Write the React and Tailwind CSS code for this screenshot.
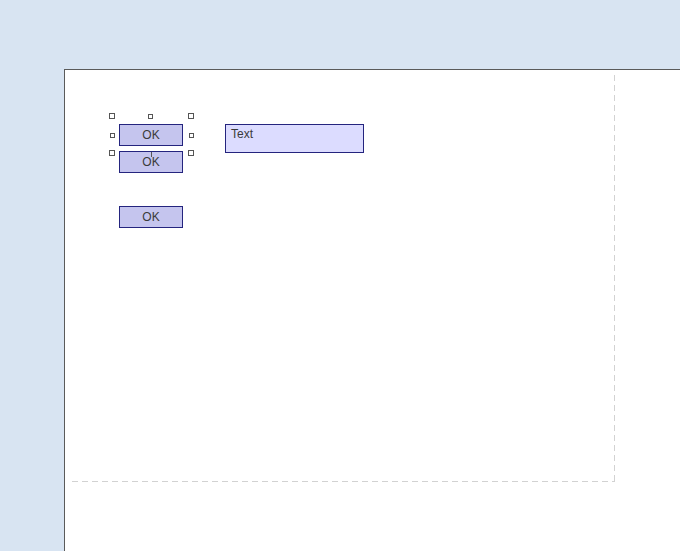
export default function App() {
  const handleCorner = "absolute w-[6px] h-[6px] border border-[#555] bg-white";
  const handleMid = "absolute w-[5px] h-[5px] border border-[#555] bg-white";
  const btn =
    "absolute w-[64px] h-[22px] bg-[#c5c5ee] border border-[#24247e] flex items-center justify-center text-[12px] text-[#3a3a3a] leading-none";
  return (
    <div
      className="w-[680px] h-[551px] bg-[#d8e4f2] overflow-hidden pt-[69px] pl-[64px]"
      style={{ fontFamily: '"Liberation Sans", Arial, sans-serif' }}
    >
      <div className="relative w-[640px] h-[500px] bg-white border-t border-l border-[#5a5a5a]">
        {/* page boundary dashed lines */}
        <div className="absolute left-[549px] top-[5px] w-px h-[407px] bg-[repeating-linear-gradient(to_bottom,#d2d2d2_0px,#d2d2d2_6px,transparent_6px,transparent_10px)]" />
        <div className="absolute left-[7px] top-[411px] w-[543px] h-px bg-[repeating-linear-gradient(to_right,#d2d2d2_0px,#d2d2d2_6px,transparent_6px,transparent_10px)]" />

        {/* selection handles of first button */}
        <div className={handleCorner + " left-[44px] top-[43px]"} />
        <div className={handleMid + " left-[83px] top-[44px]"} />
        <div className={handleCorner + " left-[123px] top-[43px]"} />
        <div className={handleMid + " left-[45px] top-[63px]"} />
        <div className={handleMid + " left-[124px] top-[63px]"} />
        <div className={handleCorner + " left-[44px] top-[80px]"} />
        <div className={handleCorner + " left-[123px] top-[80px]"} />

        <div className={btn + " left-[54px] top-[54px]"}>OK</div>
        <div className={btn + " left-[54px] top-[81px]"}>OK</div>
        <div className={btn + " left-[54px] top-[136px]"}>OK</div>

        {/* bottom-middle handle, overlapping the second button */}
        <div className="absolute left-[86px] top-[82px] w-px h-[5px] bg-[#555]" />

        <div className="absolute left-[160px] top-[54px] w-[139px] h-[29px] bg-[#dcdcff] border border-[#24247e] text-[12px] text-[#3a3a3a] pl-[5px] pt-[2px] leading-[14px]">
          Text
        </div>
      </div>
    </div>
  );
}
